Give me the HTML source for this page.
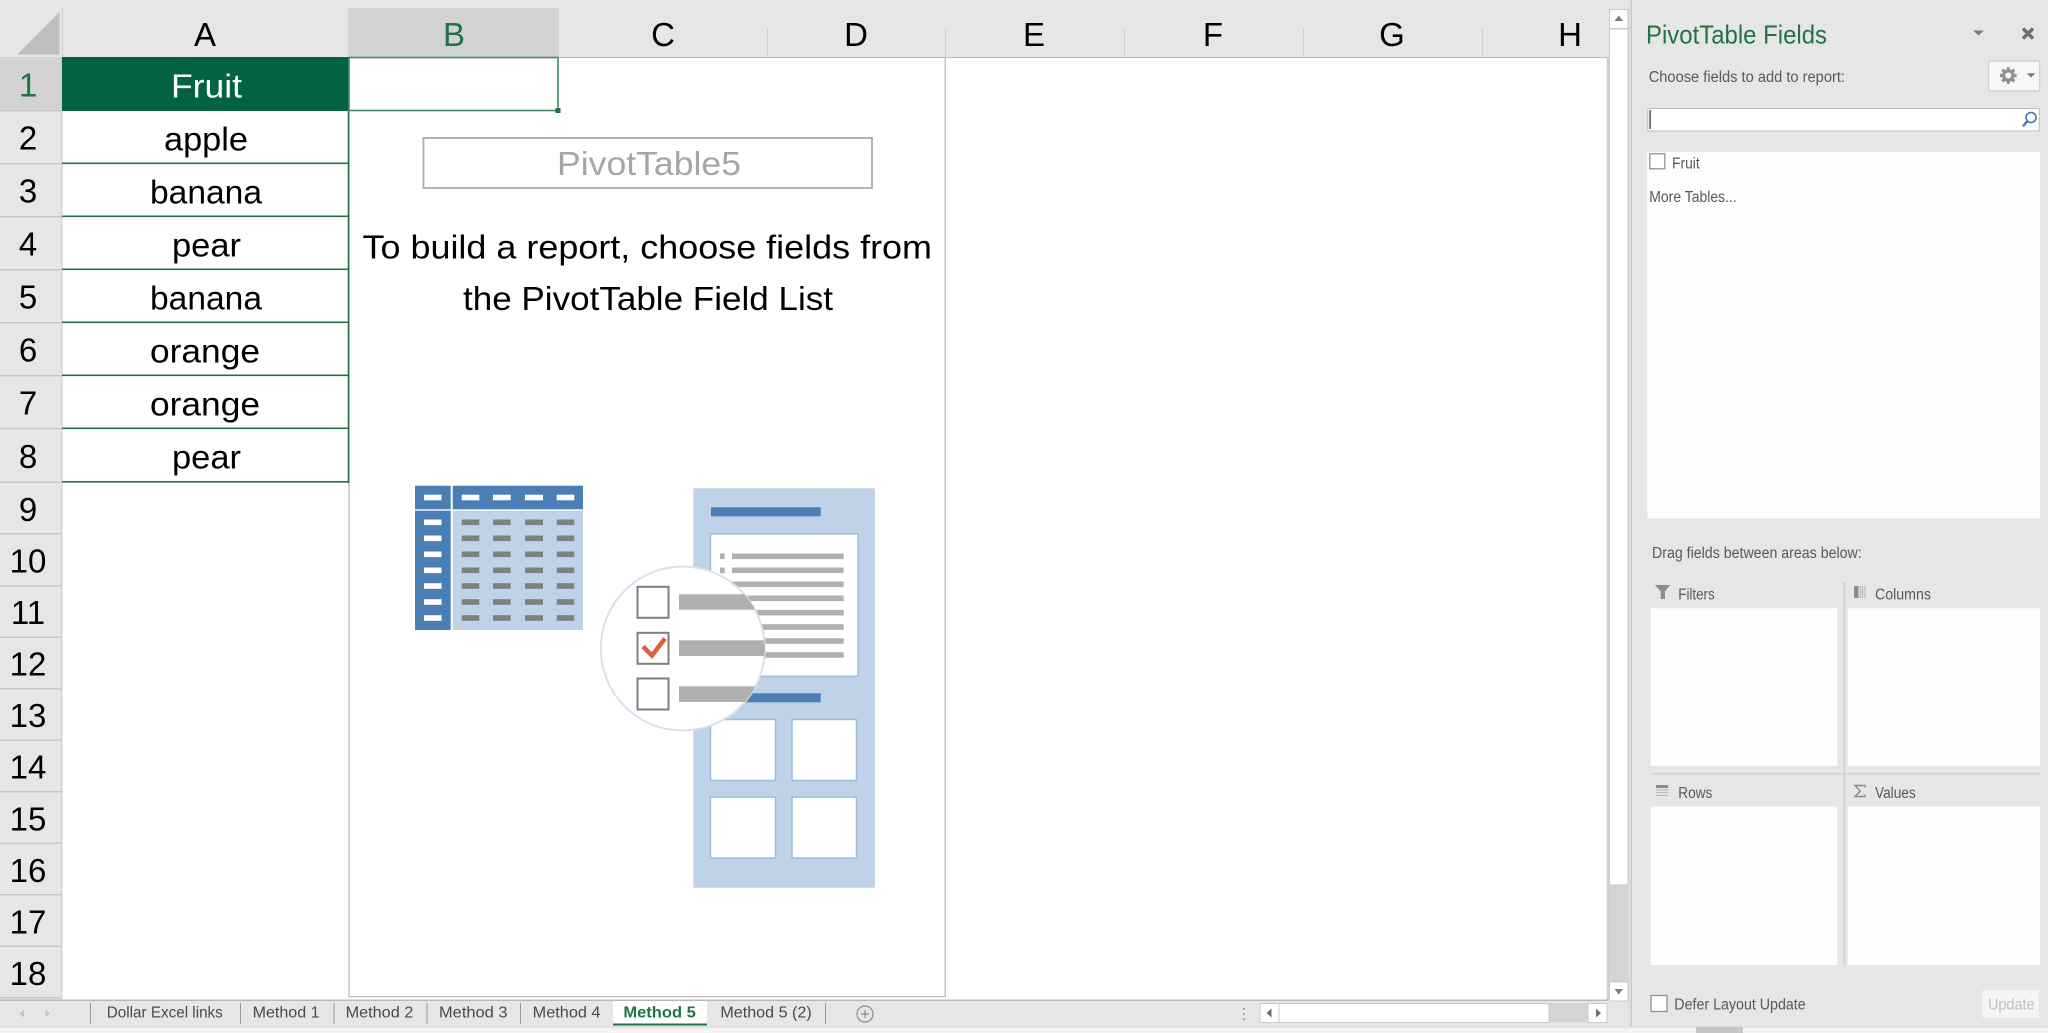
<!DOCTYPE html>
<html lang="en">
<head>
<meta charset="utf-8">
<title>PivotTable Fields</title>
<style>
html,body{margin:0;padding:0;background:#e6e6e6;width:2048px;height:1033px;overflow:hidden}
svg{display:block;filter:blur(.35px)}
text{font-family:"Liberation Sans",sans-serif}
.big{font-size:33px;fill:#000}
.mid{text-anchor:middle}
.ui{font-size:15.5px;fill:#595959}
.tab{font-size:15.5px;fill:#4a4a4a}
</style>
</head>
<body>
<svg xmlns="http://www.w3.org/2000/svg" width="2048" height="1033" viewBox="0 0 2048 1033">
<defs>
<clipPath id="cc"><circle cx="682.8" cy="648.5" r="82"/></clipPath>
</defs>
<rect width="2048" height="1033" fill="#e6e6e6"/>

<!-- sheet -->
<rect x="62" y="57" width="1545" height="943" fill="#fff"/>
<rect x="1606.7" y="58" width="2.3" height="942" fill="#cfcfcf"/>

<!-- column header -->
<rect x="349" y="8" width="209" height="49" fill="#d2d2d2"/>
<polygon points="59.5,12 59.5,54.5 17,54.5" fill="#bfbfbf"/>
<g fill="#cfcfcf">
<rect x="62" y="8" width="1" height="49"/>
<rect x="348" y="8" width="1" height="49"/>
<rect x="558" y="8" width="1" height="49"/>
<rect x="767" y="28" width="1" height="29"/>
<rect x="945" y="28" width="1" height="29"/>
<rect x="1124" y="28" width="1" height="29"/>
<rect x="1303" y="28" width="1" height="29"/>
<rect x="1482" y="28" width="1" height="29"/>
</g>
<rect x="62" y="57" width="1545" height="1" fill="#b8b8b8"/>
<text class="big mid" x="205" y="46">A</text>
<text class="mid" x="454" y="46" font-size="33" fill="#217346">B</text>
<text class="big mid" x="663" y="46">C</text>
<text class="big mid" x="856" y="46">D</text>
<text class="big mid" x="1034" y="46">E</text>
<text class="big mid" x="1213" y="46">F</text>
<text class="big mid" x="1392" y="46">G</text>
<text class="big mid" x="1570" y="46">H</text>

<!-- row header -->
<rect x="0" y="57" width="62" height="54" fill="#d2d2d2"/>
<g fill="#c8c8c8">
<rect x="0" y="110" width="62" height="1.5"/>
<rect x="0" y="163" width="62" height="1.5"/>
<rect x="0" y="216" width="62" height="1.5"/>
<rect x="0" y="269" width="62" height="1.5"/>
<rect x="0" y="322" width="62" height="1.5"/>
<rect x="0" y="375" width="62" height="1.5"/>
<rect x="0" y="428" width="62" height="1.5"/>
<rect x="0" y="481.5" width="62" height="1.5"/>
<rect x="0" y="533" width="62" height="1.5"/>
<rect x="0" y="585" width="62" height="1.5"/>
<rect x="0" y="636.5" width="62" height="1.5"/>
<rect x="0" y="688" width="62" height="1.5"/>
<rect x="0" y="739.5" width="62" height="1.5"/>
<rect x="0" y="791" width="62" height="1.5"/>
<rect x="0" y="842.5" width="62" height="1.5"/>
<rect x="0" y="894" width="62" height="1.5"/>
<rect x="0" y="945.5" width="62" height="1.5"/>
<rect x="0" y="997" width="62" height="1.5"/>
<rect x="61.5" y="57" width="1" height="943"/>
</g>
<text class="mid" x="28" y="96.5" font-size="33" fill="#217346">1</text>
<text class="big mid" x="28" y="149.5">2</text>
<text class="big mid" x="28" y="202.5">3</text>
<text class="big mid" x="28" y="255.5">4</text>
<text class="big mid" x="28" y="308.5">5</text>
<text class="big mid" x="28" y="361.5">6</text>
<text class="big mid" x="28" y="414.5">7</text>
<text class="big mid" x="28" y="468">8</text>
<text class="big mid" x="28" y="521">9</text>
<text class="big mid" x="28" y="572.5">10</text>
<text class="big mid" x="28" y="624">11</text>
<text class="big mid" x="28" y="675.5">12</text>
<text class="big mid" x="28" y="727">13</text>
<text class="big mid" x="28" y="778.5">14</text>
<text class="big mid" x="28" y="830.5">15</text>
<text class="big mid" x="28" y="882">16</text>
<text class="big mid" x="28" y="933.5">17</text>
<text class="big mid" x="28" y="985">18</text>

<!-- pivot frame -->
<path d="M349 111V996.7H945.2V58" fill="none" stroke="#b6b6b6" stroke-width="1.2"/>

<!-- column A table -->
<rect x="62" y="57" width="286.5" height="54" fill="#026243"/>
<g fill="#217346">
<rect x="62" y="162.5" width="287" height="1.6"/>
<rect x="62" y="215.5" width="287" height="1.6"/>
<rect x="62" y="268.5" width="287" height="1.6"/>
<rect x="62" y="321.5" width="287" height="1.6"/>
<rect x="62" y="374.5" width="287" height="1.6"/>
<rect x="62" y="427.5" width="287" height="1.6"/>
<rect x="62" y="481" width="287" height="1.6"/>
<rect x="347.7" y="111" width="1.6" height="372"/>
</g>
<text x="171" y="97.7" font-size="33" fill="#fff" textLength="71" lengthAdjust="spacingAndGlyphs">Fruit</text>
<text class="big" x="164" y="150.7" textLength="84" lengthAdjust="spacingAndGlyphs">apple</text>
<text class="big" x="150" y="203.5" textLength="112" lengthAdjust="spacingAndGlyphs">banana</text>
<text class="big" x="172" y="256.5" textLength="69" lengthAdjust="spacingAndGlyphs">pear</text>
<text class="big" x="150" y="309.5" textLength="112" lengthAdjust="spacingAndGlyphs">banana</text>
<text class="big" x="150" y="362.5" textLength="110" lengthAdjust="spacingAndGlyphs">orange</text>
<text class="big" x="150" y="415.5" textLength="110" lengthAdjust="spacingAndGlyphs">orange</text>
<text class="big" x="172" y="468.7" textLength="69" lengthAdjust="spacingAndGlyphs">pear</text>

<rect x="349" y="57.5" width="209" height="53" fill="#fff" stroke="#3f8a65" stroke-width="1.6"/>
<rect x="555.5" y="108" width="5" height="5" fill="#217346"/>
<rect x="423.5" y="138" width="448.5" height="50" fill="#fff" stroke="#ababab" stroke-width="1.8"/>
<text x="557" y="175" font-size="33" fill="#a6a6a6" textLength="184" lengthAdjust="spacingAndGlyphs">PivotTable5</text>
<text class="big" x="362.5" y="258.3" textLength="569.5" lengthAdjust="spacingAndGlyphs">To build a report, choose fields from</text>
<text class="big" x="463" y="310" textLength="370" lengthAdjust="spacingAndGlyphs">the PivotTable Field List</text>

<!-- illustration: left table -->
<g fill="#4a7eb5">
<rect x="415" y="485.7" width="35.7" height="23.6"/>
<rect x="452.7" y="485.7" width="130.3" height="23.6"/>
<rect x="415" y="510.7" width="35.7" height="119.3"/>
</g>
<rect x="452.7" y="510.7" width="130.3" height="119.3" fill="#c0d2e7"/>
<g fill="#fff">
<rect x="424" y="494.7" width="17.5" height="5.6"/>
<rect x="461.7" y="494.7" width="17.6" height="5.6"/>
<rect x="493" y="494.7" width="17.7" height="5.6"/>
<rect x="525" y="494.7" width="18" height="5.6"/>
<rect x="556.7" y="494.7" width="17.6" height="5.6"/>
<rect x="424" y="519.5" width="17.5" height="5.6"/>
<rect x="424" y="535.5" width="17.5" height="5.6"/>
<rect x="424" y="551.5" width="17.5" height="5.6"/>
<rect x="424" y="567.5" width="17.5" height="5.6"/>
<rect x="424" y="583.2" width="17.5" height="5.6"/>
<rect x="424" y="599.2" width="17.5" height="5.6"/>
<rect x="424" y="615.2" width="17.5" height="5.6"/>
</g>
<g fill="#808080">
<rect x="461.7" y="519.5" width="17.6" height="5.6"/><rect x="493" y="519.5" width="17.7" height="5.6"/><rect x="525" y="519.5" width="18" height="5.6"/><rect x="556.7" y="519.5" width="17.6" height="5.6"/>
<rect x="461.7" y="535.5" width="17.6" height="5.6"/><rect x="493" y="535.5" width="17.7" height="5.6"/><rect x="525" y="535.5" width="18" height="5.6"/><rect x="556.7" y="535.5" width="17.6" height="5.6"/>
<rect x="461.7" y="551.5" width="17.6" height="5.6"/><rect x="493" y="551.5" width="17.7" height="5.6"/><rect x="525" y="551.5" width="18" height="5.6"/><rect x="556.7" y="551.5" width="17.6" height="5.6"/>
<rect x="461.7" y="567.5" width="17.6" height="5.6"/><rect x="493" y="567.5" width="17.7" height="5.6"/><rect x="525" y="567.5" width="18" height="5.6"/><rect x="556.7" y="567.5" width="17.6" height="5.6"/>
<rect x="461.7" y="583.2" width="17.6" height="5.6"/><rect x="493" y="583.2" width="17.7" height="5.6"/><rect x="525" y="583.2" width="18" height="5.6"/><rect x="556.7" y="583.2" width="17.6" height="5.6"/>
<rect x="461.7" y="599.2" width="17.6" height="5.6"/><rect x="493" y="599.2" width="17.7" height="5.6"/><rect x="525" y="599.2" width="18" height="5.6"/><rect x="556.7" y="599.2" width="17.6" height="5.6"/>
<rect x="461.7" y="615.2" width="17.6" height="5.6"/><rect x="493" y="615.2" width="17.7" height="5.6"/><rect x="525" y="615.2" width="18" height="5.6"/><rect x="556.7" y="615.2" width="17.6" height="5.6"/>
</g>

<!-- illustration: right panel -->
<rect x="693.3" y="488.3" width="181.7" height="399.4" fill="#c0d2e7"/>
<rect x="711" y="507.3" width="109.7" height="9" fill="#4a7eb5"/>
<rect x="711" y="693.3" width="109.7" height="9" fill="#4a7eb5"/>
<rect x="710.5" y="533.8" width="147.5" height="142.5" fill="#fff" stroke="#9dbcdc" stroke-width="1.5"/>
<g fill="#b0b0b0">
<rect x="732" y="553.5" width="111.7" height="5.6"/>
<rect x="732" y="567.5" width="111.7" height="5.6"/>
<rect x="732" y="581.5" width="111.7" height="5.6"/>
<rect x="732" y="595.5" width="111.7" height="5.6"/>
<rect x="732" y="609.9" width="111.7" height="5.6"/>
<rect x="732" y="624.2" width="111.7" height="5.6"/>
<rect x="732" y="638.2" width="111.7" height="5.6"/>
<rect x="732" y="652.2" width="111.7" height="5.6"/>
<rect x="720" y="553.5" width="4.7" height="5.6"/>
<rect x="720" y="567.5" width="4.7" height="5.6"/>
</g>
<g fill="#fff" stroke="#9dbcdc" stroke-width="1.5">
<rect x="710.5" y="719.5" width="65" height="61"/>
<rect x="792" y="719.5" width="64.5" height="61"/>
<rect x="710.5" y="797" width="65" height="61"/>
<rect x="792" y="797" width="64.5" height="61"/>
</g>
<circle cx="682.8" cy="648.5" r="82" fill="#fff" stroke="#d5e1ee" stroke-width="2"/>
<g clip-path="url(#cc)" fill="#b0b0b0">
<rect x="679" y="594.3" width="90" height="15.4"/>
<rect x="679" y="640.3" width="90" height="15.7"/>
<rect x="679" y="686.3" width="90" height="15.7"/>
</g>
<g fill="#fff" stroke="#7f7f7f" stroke-width="2">
<rect x="637.5" y="586.8" width="31" height="31"/>
<rect x="637.5" y="632.8" width="31" height="31"/>
<rect x="637.5" y="678.5" width="31" height="31"/>
</g>
<polyline points="643,646.5 652,655.5 665,638.5" fill="none" stroke="#d9623e" stroke-width="4.5"/>

<!-- vertical scrollbar -->
<rect x="1609" y="28" width="19.5" height="954" fill="#d4d4d4"/>
<rect x="1609.5" y="29" width="18.5" height="856" fill="#fff" stroke="#c9c9c9"/>
<rect x="1609.5" y="9.5" width="18.5" height="19" fill="#fff" stroke="#c9c9c9"/>
<polygon points="1614.5,21 1623,21 1618.7,15.5" fill="#7a7a7a"/>
<rect x="1609.5" y="982" width="18.5" height="19" fill="#fff" stroke="#c9c9c9"/>
<polygon points="1614.5,989 1623,989 1618.7,994.5" fill="#7a7a7a"/>
<rect x="1628.5" y="0" width="2.5" height="1027" fill="#dcdcdc"/>
<rect x="1631" y="0" width="1" height="1027" fill="#c8c8c8"/>

<!-- tab bar -->
<rect x="0" y="999.5" width="1608" height="1.5" fill="#b8b8b8"/>
<rect x="613" y="1001" width="94" height="23" fill="#fff"/>
<rect x="613" y="1023.5" width="94" height="2" fill="#217346"/>
<g fill="#9b9b9b">
<rect x="90" y="1003" width="1" height="21"/>
<rect x="240" y="1003" width="1" height="21"/>
<rect x="333.5" y="1003" width="1" height="21"/>
<rect x="426.5" y="1003" width="1" height="21"/>
<rect x="520" y="1003" width="1" height="21"/>
<rect x="825" y="1003" width="1" height="21"/>
</g>
<polygon points="24,1009.5 24,1017.5 19.5,1013.5" fill="#c4c4c4"/>
<polygon points="45.5,1009.5 45.5,1017.5 50,1013.5" fill="#c4c4c4"/>
<text class="tab" x="106.8" y="1017.7" textLength="116" lengthAdjust="spacingAndGlyphs">Dollar Excel links</text>
<text class="tab" x="252.6" y="1017.7" textLength="67" lengthAdjust="spacingAndGlyphs">Method 1</text>
<text class="tab" x="345.6" y="1017.7" textLength="67.7" lengthAdjust="spacingAndGlyphs">Method 2</text>
<text class="tab" x="439" y="1017.7" textLength="68.5" lengthAdjust="spacingAndGlyphs">Method 3</text>
<text class="tab" x="532.7" y="1017.7" textLength="67.8" lengthAdjust="spacingAndGlyphs">Method 4</text>
<text x="623.4" y="1017.7" font-size="15.5" font-weight="700" fill="#217346" textLength="72.4" lengthAdjust="spacingAndGlyphs">Method 5</text>
<text class="tab" x="720.4" y="1017.7" textLength="91.3" lengthAdjust="spacingAndGlyphs">Method 5 (2)</text>
<circle cx="865" cy="1014" r="8" fill="none" stroke="#8c8c8c" stroke-width="1.2"/>
<path d="M861 1014H869M865 1010V1018" stroke="#8c8c8c" stroke-width="1.2"/>

<!-- horizontal scrollbar -->
<g fill="#9d9d9d">
<rect x="1243" y="1008" width="1.6" height="2"/><rect x="1243" y="1013" width="1.6" height="2"/><rect x="1243" y="1018" width="1.6" height="2"/>
</g>
<rect x="1259.5" y="1003" width="348" height="19.5" fill="#d4d4d4"/>
<rect x="1260" y="1003.5" width="19" height="19" fill="#fff" stroke="#c9c9c9"/>
<rect x="1279" y="1003.5" width="270" height="19" fill="#fff" stroke="#c9c9c9"/>
<rect x="1588" y="1003.5" width="19" height="19" fill="#fff" stroke="#c9c9c9"/>
<polygon points="1271.5,1008.5 1271.5,1017.5 1266.5,1013" fill="#6e6e6e"/>
<polygon points="1596,1008.5 1596,1017.5 1601,1013" fill="#6e6e6e"/>

<!-- bottom strip -->
<rect x="0" y="1027" width="2048" height="6" fill="#f2f2f2"/>
<rect x="0" y="1026.5" width="2048" height="1" fill="#d6d6d6"/>
<rect x="1696" y="1027" width="47" height="6" fill="#c6c6c6"/>

<!-- pane -->
<text x="1646" y="43.3" font-size="26" fill="#217346" textLength="181" lengthAdjust="spacingAndGlyphs">PivotTable Fields</text>
<polygon points="1973,30.5 1984,30.5 1978.5,35.5" fill="#7a7a7a"/>
<path d="M2023 28.5L2033 38.5M2033 28.5L2023 38.5" stroke="#6e6e6e" stroke-width="3.4"/>
<text class="ui" x="1648.7" y="82" textLength="196.3" lengthAdjust="spacingAndGlyphs">Choose fields to add to report:</text>
<rect x="1988.7" y="61" width="51" height="30" fill="#f7f7f7" stroke="#c6c6c6"/>
<g transform="translate(2008.3 75.5)">
<path d="M0 -8.3V8.3M-8.3 0H8.3M-5.9 -5.9L5.9 5.9M-5.9 5.9L5.9 -5.9" stroke="#8f8f8f" stroke-width="3.2"/>
<circle r="4.6" fill="#f7f7f7" stroke="#8f8f8f" stroke-width="3"/>
</g>
<polygon points="2026.7,73.3 2035.3,73.3 2031,77.5" fill="#7a7a7a"/>
<rect x="1647.8" y="108.5" width="391.5" height="22.5" fill="#fff" stroke="#bdbdbd"/>
<rect x="1649.5" y="110" width="1.2" height="19" fill="#222"/>
<circle cx="2031" cy="117.5" r="5" fill="none" stroke="#3c78b5" stroke-width="1.6"/>
<path d="M2027.3 121L2023 126.3" stroke="#3c78b5" stroke-width="2.3"/>

<rect x="1647.3" y="152" width="392.7" height="366.5" fill="#fdfdfd"/>
<rect x="1649.8" y="153.8" width="15" height="15" fill="#fff" stroke="#8a8a8a" stroke-width="1.2"/>
<text class="ui" x="1672" y="168.3" textLength="27.7" lengthAdjust="spacingAndGlyphs">Fruit</text>
<text class="ui" x="1649.3" y="202" textLength="87.4" lengthAdjust="spacingAndGlyphs">More Tables...</text>
<text class="ui" x="1652" y="558" textLength="209.7" lengthAdjust="spacingAndGlyphs">Drag fields between areas below:</text>

<rect x="1843.5" y="582" width="1.8" height="383" fill="#d0d0d0"/>
<rect x="1650.7" y="773" width="389.3" height="1.5" fill="#d0d0d0"/>
<g fill="#fdfdfd">
<rect x="1650.7" y="608.3" width="186.6" height="157.7"/>
<rect x="1847.7" y="608.3" width="192.3" height="157.7"/>
<rect x="1650.7" y="806.7" width="186.6" height="158.3"/>
<rect x="1847.7" y="806.7" width="192.3" height="158.3"/>
</g>
<polygon points="1655,585 1670,585 1665,591.5 1665,599 1660.7,599 1660.7,591.5" fill="#8c8c8c"/>
<text class="ui" x="1678.3" y="599.3" textLength="36.4" lengthAdjust="spacingAndGlyphs">Filters</text>
<rect x="1854" y="586" width="4.5" height="12" fill="#8c8c8c"/>
<path d="M1860.3 586V598M1862.7 586V598M1865 586V598" stroke="#ababab" stroke-width=".9"/>
<text class="ui" x="1875" y="599.3" textLength="56" lengthAdjust="spacingAndGlyphs">Columns</text>
<rect x="1656" y="785" width="12.3" height="3" fill="#8c8c8c"/>
<path d="M1656 790H1668.3M1656 792.7H1668.3M1656 795.4H1668.3" stroke="#b0b0b0" stroke-width=".9"/>
<text class="ui" x="1678.3" y="798" textLength="34" lengthAdjust="spacingAndGlyphs">Rows</text>
<path d="M1865 787.5V785.5H1855L1860.3 791L1855 796.5H1865V794.5" fill="none" stroke="#8c8c8c" stroke-width="1.4"/>
<text class="ui" x="1875" y="798" textLength="40.7" lengthAdjust="spacingAndGlyphs">Values</text>

<rect x="1651" y="995.5" width="16" height="16" fill="#fff" stroke="#8a8a8a" stroke-width="1.2"/>
<text class="ui" x="1674.3" y="1009.3" textLength="131.4" lengthAdjust="spacingAndGlyphs">Defer Layout Update</text>
<rect x="1982.6" y="990" width="56.2" height="28" fill="#f4f4f4"/>
<text x="1988" y="1009.3" font-size="15.5" fill="#c0c0c0" textLength="46.5" lengthAdjust="spacingAndGlyphs">Update</text>
</svg>
</body>
</html>
